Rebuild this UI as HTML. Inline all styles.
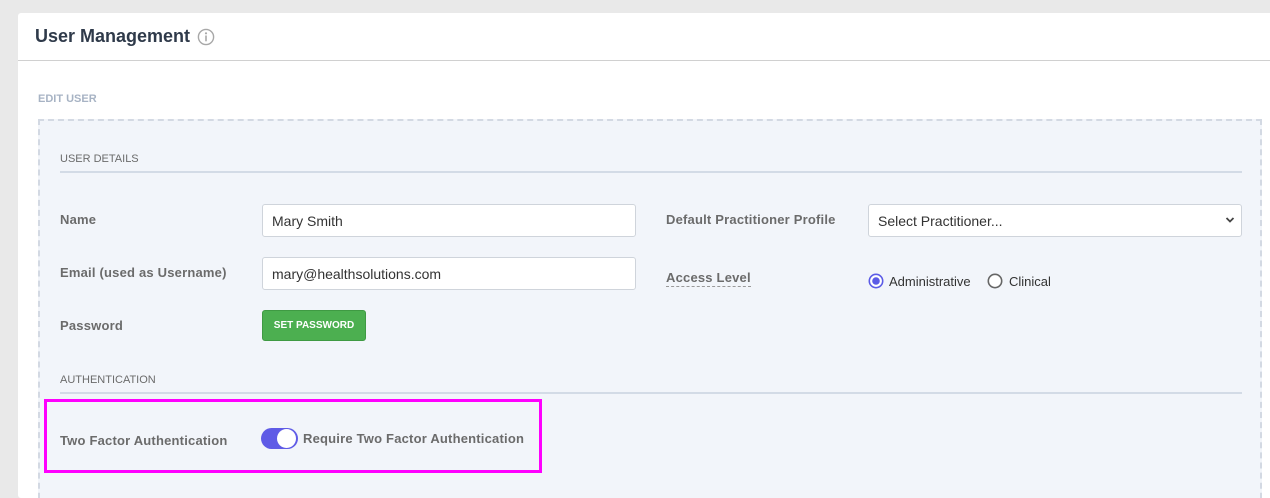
<!DOCTYPE html><html style="width:1270px;height:498px;overflow:hidden"><head><style>
body{margin:0;width:1270px;height:498px;background:#e9e9e9;font-family:"Liberation Sans",sans-serif;position:relative;overflow:hidden}
.a{position:absolute;white-space:nowrap}
.lbl{font-size:13px;color:#6b6b6b;font-weight:bold;letter-spacing:0.2px}
.sec{font-size:11px;color:#6b6b6b}
.inp{position:absolute;background:#fff;border:1px solid #cfd4db;border-radius:3px;box-sizing:border-box;font-size:14px;color:#333;padding:8px 0 0 9px}
</style></head><body>
<div class="a" style="left:18px;top:13px;width:1260px;height:485px;background:#fff;border-radius:3px"></div>
<div class="a" style="left:18px;top:60px;width:1260px;height:1px;background:#d0d0d0"></div>
<div class="a" style="left:35px;top:26px;font-size:18px;font-weight:bold;color:#2f3a4a">User Management</div>
<svg class="a" style="left:197px;top:28px" width="18" height="18" viewBox="0 0 18 18"><circle cx="9" cy="9" r="7.6" fill="none" stroke="#a8a8a8" stroke-width="1.4"/><circle cx="9" cy="5.3" r="1.1" fill="#a8a8a8"/><rect x="8.2" y="7.5" width="1.6" height="5.8" fill="#a8a8a8"/></svg>
<div class="a" style="left:38px;top:93px;font-size:11px;font-weight:bold;color:#a7b3c4">EDIT USER</div>
<div class="a" style="left:38px;top:119px;width:1224px;height:400px;background:#f2f5fa;border:2px dashed #d3d9e3;box-sizing:border-box"></div>
<div class="a sec" style="left:60px;top:153px">USER DETAILS</div>
<div class="a" style="left:60px;top:171px;width:1182px;height:2px;background:#d3dbe6"></div>
<div class="a lbl" style="left:60px;top:212px">Name</div>
<div class="inp" style="left:262px;top:204px;width:374px;height:33px">Mary Smith</div>
<div class="a lbl" style="left:60px;top:265px">Email (used as Username)</div>
<div class="inp" style="left:262px;top:257px;width:374px;height:33px">mary@healthsolutions.com</div>
<div class="a lbl" style="left:60px;top:318px">Password</div>
<div class="a" style="left:262px;top:310px;width:104px;height:31px;background:#4caf50;border:1px solid #3f9a43;border-radius:3px;box-sizing:border-box;color:#fff;font-size:10px;font-weight:bold;text-align:center;line-height:29px">SET PASSWORD</div>
<div class="a lbl" style="left:666px;top:212px">Default Practitioner Profile</div>
<div class="inp" style="left:868px;top:204px;width:374px;height:33px">Select Practitioner...</div>
<svg class="a" style="left:1225px;top:216px" width="10" height="8"><path d="M1.5 2l3.5 3.5L8.5 2" fill="none" stroke="#444" stroke-width="1.8"/></svg>
<div class="a lbl" style="left:666px;top:270px;border-bottom:1px dashed #999;padding-bottom:1px">Access Level</div>
<svg class="a" style="left:868px;top:273px" width="16" height="16"><circle cx="8" cy="8" r="6.7" fill="#fff" stroke="#5b5be6" stroke-width="1.6"/><circle cx="8" cy="8" r="3.8" fill="#5b5be6"/></svg>
<div class="a" style="left:889px;top:274px;font-size:13px;color:#333">Administrative</div>
<svg class="a" style="left:987px;top:273px" width="16" height="16"><circle cx="8" cy="8" r="6.7" fill="#fff" stroke="#666" stroke-width="1.6"/></svg>
<div class="a" style="left:1009px;top:274px;font-size:13px;color:#333">Clinical</div>
<div class="a sec" style="left:60px;top:374px">AUTHENTICATION</div>
<div class="a" style="left:60px;top:392px;width:1182px;height:2px;background:#d3dbe6"></div>
<div class="a" style="left:44px;top:399px;width:498px;height:74px;border:3px solid #ff00ff;box-sizing:border-box"></div>
<div class="a lbl" style="left:60px;top:433px">Two Factor Authentication</div>
<div class="a" style="left:261px;top:428px;width:37px;height:21px;background:#5f5be6;border-radius:11px"></div>
<div class="a" style="left:277px;top:429px;width:19px;height:19px;background:#fff;border-radius:50%"></div>
<div class="a lbl" style="left:303px;top:431px">Require Two Factor Authentication</div>
</body></html>
